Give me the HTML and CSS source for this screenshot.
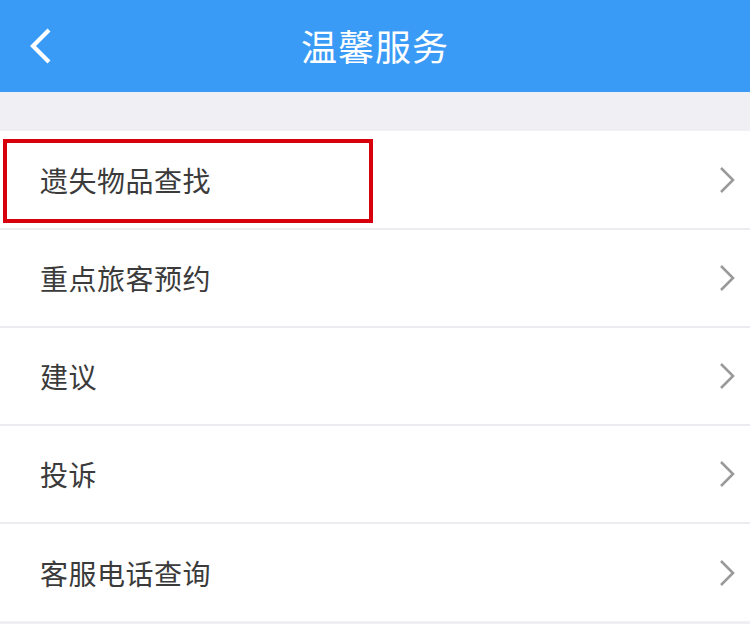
FILE: index.html
```html
<!DOCTYPE html>
<html lang="zh">
<head>
<meta charset="utf-8">
<link rel="stylesheet" href="styles.css">
</head>
<body>
<header class="nav">
  <span class="back">
    <svg width="26" height="36" viewBox="0 0 26 36"><path d="M21 2 L5 18 L21 34" fill="none" stroke="#fff" stroke-width="4.2" stroke-linecap="butt" stroke-linejoin="miter"/></svg>
  </span>
  <h1 class="title">温馨服务</h1>
</header>
<div class="gap"></div>
<ul class="list">
  <li class="item highlight"><span class="label">遗失物品查找</span><svg class="arrow" width="16" height="28" viewBox="0 0 16 28"><path d="M2 2 L14 14 L2 26" fill="none" stroke="#9a9a9a" stroke-width="2.6"/></svg><span class="mark"></span></li>
  <li class="item"><span class="label">重点旅客预约</span><svg class="arrow" width="16" height="28" viewBox="0 0 16 28"><path d="M2 2 L14 14 L2 26" fill="none" stroke="#9a9a9a" stroke-width="2.6"/></svg></li>
  <li class="item"><span class="label">建议</span><svg class="arrow" width="16" height="28" viewBox="0 0 16 28"><path d="M2 2 L14 14 L2 26" fill="none" stroke="#9a9a9a" stroke-width="2.6"/></svg></li>
  <li class="item"><span class="label">投诉</span><svg class="arrow" width="16" height="28" viewBox="0 0 16 28"><path d="M2 2 L14 14 L2 26" fill="none" stroke="#9a9a9a" stroke-width="2.6"/></svg></li>
  <li class="item"><span class="label">客服电话查询</span><svg class="arrow" width="16" height="28" viewBox="0 0 16 28"><path d="M2 2 L14 14 L2 26" fill="none" stroke="#9a9a9a" stroke-width="2.6"/></svg></li>
</ul>
</body>
</html>
```

FILE: styles.css
```css
html, body {
  margin: 0;
  padding: 0;
  background: #efeff4;
  font-family: "Noto Sans CJK SC", "Noto Sans", sans-serif;
}
.nav {
  height: 92px;
  background: #3a9bf6;
  display: flex;
  align-items: center;
  justify-content: center;
  position: relative;
}
.back {
  position: absolute;
  left: 28px;
  top: 28px;
  display: block;
  width: 26px;
  height: 36px;
}
.back svg { display: block; }
.title {
  margin: 0;
  color: #fff;
  font-size: 36px;
  font-weight: 400;
  letter-spacing: 1px;
  line-height: 1;
  padding-bottom: 2px;
}
.gap {
  height: 39px;
}
.list {
  list-style: none;
  margin: 0;
  padding: 0;
  background: #fff;
}
.item {
  position: relative;
  height: 96px;
  display: flex;
  align-items: center;
  justify-content: space-between;
  padding: 0 15px 0 40px;
  border-bottom: 2px solid #ececf0;
  background: #fff;
}
.item:first-child {
  height: 97px;
}
.item:last-child {
  border-bottom: none;
  height: 97px;
}
.label {
  font-size: 28px;
  color: #3b3b3b;
  letter-spacing: 0.5px;
}
.arrow {
  display: block;
}
.mark {
  position: absolute;
  left: 3px;
  top: 8px;
  width: 362px;
  height: 76px;
  border: 4px solid #d8000d;
}
```
